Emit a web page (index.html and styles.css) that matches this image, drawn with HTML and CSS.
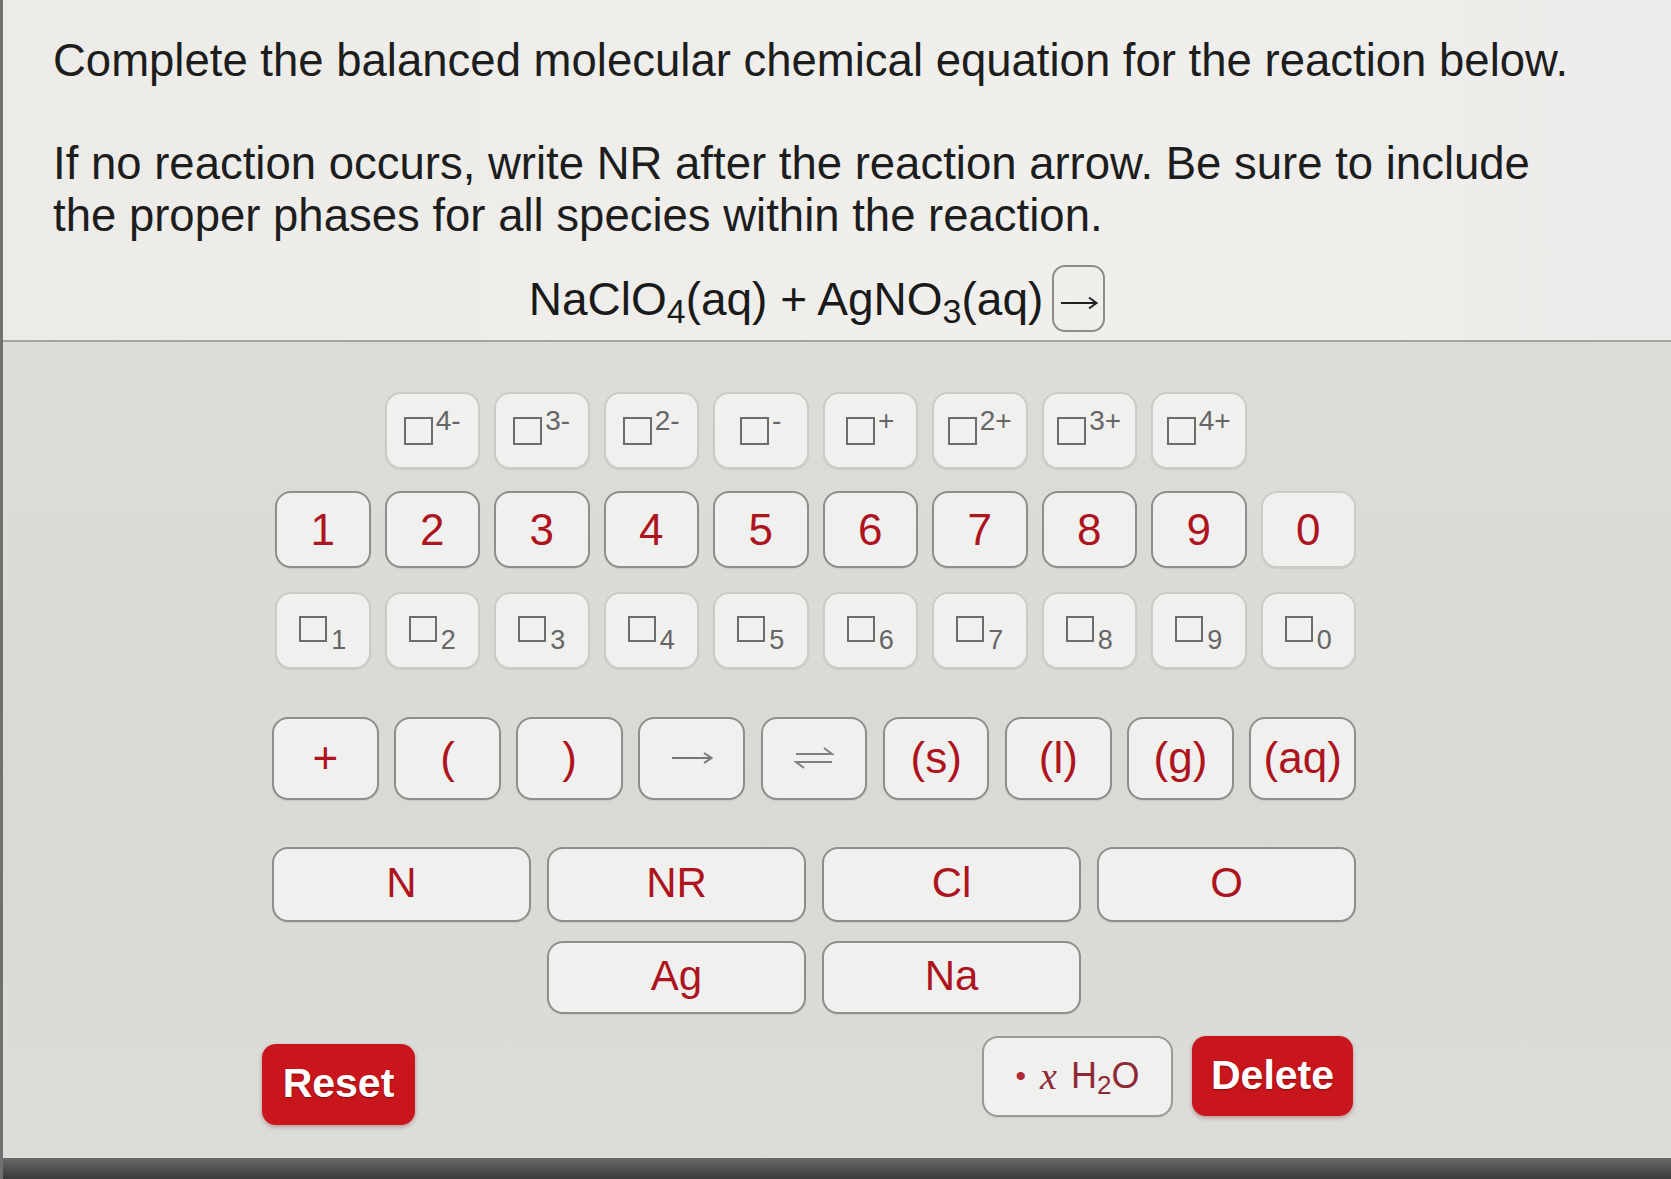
FILE: index.html
```html
<!DOCTYPE html>
<html lang="en">
<head>
<meta charset="utf-8">
<title>Chemical equation</title>
<link rel="stylesheet" href="styles.css">
</head>
<body>
<div class="page">
  <section class="top">
    <p class="q">Complete the balanced molecular chemical equation for the reaction below.</p>
    <p class="q q2">If no reaction occurs, write NR after the reaction arrow. Be sure to include<br>the proper phases for all species within the reaction.</p>
    <div class="eq">
      <span class="eqtext">NaClO<sub>4</sub>(aq) + AgNO<sub>3</sub>(aq)</span>
      <span class="arrowbox"><svg width="40" height="16" viewBox="0 0 40 16"><path d="M2 8 H37 M30 2.5 L37.5 8 L30 13.5" fill="none" stroke="#222" stroke-width="2"/></svg></span>
    </div>
  </section>

  <section class="panel">
    <div class="pad">
      <div class="row grid10 r1">
        <button class="key light c2"><span class="grp sp"><span class="sq"></span><span class="sup">4-</span></span></button>
        <button class="key light"><span class="grp sp"><span class="sq"></span><span class="sup">3-</span></span></button>
        <button class="key light"><span class="grp sp"><span class="sq"></span><span class="sup">2-</span></span></button>
        <button class="key light"><span class="grp sp"><span class="sq"></span><span class="sup">-</span></span></button>
        <button class="key light"><span class="grp sp"><span class="sq"></span><span class="sup">+</span></span></button>
        <button class="key light"><span class="grp sp"><span class="sq"></span><span class="sup">2+</span></span></button>
        <button class="key light"><span class="grp sp"><span class="sq"></span><span class="sup">3+</span></span></button>
        <button class="key light"><span class="grp sp"><span class="sq"></span><span class="sup">4+</span></span></button>
      </div>

      <div class="row grid10 r2">
        <button class="key red dig">1</button>
        <button class="key red dig">2</button>
        <button class="key red dig">3</button>
        <button class="key red dig">4</button>
        <button class="key red dig">5</button>
        <button class="key red dig">6</button>
        <button class="key red dig">7</button>
        <button class="key red dig">8</button>
        <button class="key red dig">9</button>
        <button class="key red dig light">0</button>
      </div>

      <div class="row grid10 r3">
        <button class="key light"><span class="grp sb"><span class="sq sqs"></span><span class="sub">1</span></span></button>
        <button class="key light"><span class="grp sb"><span class="sq sqs"></span><span class="sub">2</span></span></button>
        <button class="key light"><span class="grp sb"><span class="sq sqs"></span><span class="sub">3</span></span></button>
        <button class="key light"><span class="grp sb"><span class="sq sqs"></span><span class="sub">4</span></span></button>
        <button class="key light"><span class="grp sb"><span class="sq sqs"></span><span class="sub">5</span></span></button>
        <button class="key light"><span class="grp sb"><span class="sq sqs"></span><span class="sub">6</span></span></button>
        <button class="key light"><span class="grp sb"><span class="sq sqs"></span><span class="sub">7</span></span></button>
        <button class="key light"><span class="grp sb"><span class="sq sqs"></span><span class="sub">8</span></span></button>
        <button class="key light"><span class="grp sb"><span class="sq sqs"></span><span class="sub">9</span></span></button>
        <button class="key light"><span class="grp sb"><span class="sq sqs"></span><span class="sub">0</span></span></button>
      </div>

      <div class="row grid9 r4">
        <button class="key red sym">+</button>
        <button class="key red sym">(</button>
        <button class="key red sym">)</button>
        <button class="key sym" aria-label="arrow"><svg width="44" height="16" viewBox="0 0 44 16"><path d="M2 8 H41 M34 3 L41.5 8 L34 13" fill="none" stroke="#777" stroke-width="2"/></svg></button>
        <button class="key sym" aria-label="equilibrium"><svg width="40" height="26" viewBox="0 0 40 26"><path d="M2 9 H38 L30 3 M38 17 H2 L10 23" fill="none" stroke="#808080" stroke-width="2"/></svg></button>
        <button class="key red sym">(s)</button>
        <button class="key red sym">(l)</button>
        <button class="key red sym">(g)</button>
        <button class="key red sym">(aq)</button>
      </div>

      <div class="row grid4 r5">
        <button class="key red el">N</button>
        <button class="key red el">NR</button>
        <button class="key red el">Cl</button>
        <button class="key red el">O</button>
      </div>

      <div class="row grid4 r6">
        <button class="key red el c2">Ag</button>
        <button class="key red el">Na</button>
      </div>

      <div class="row r7">
        <button class="action reset">Reset</button>
        <button class="key water"><span class="dot">&#8226;</span><span class="xi">x</span><span class="h2o">H<sub>2</sub>O</span></button>
        <button class="action delete">Delete</button>
      </div>
    </div>
  </section>
  <div class="bottombar"></div>
</div>
</body>
</html>
```

FILE: styles.css
```css
* { box-sizing: border-box; }

html, body {
  margin: 0;
  padding: 0;
}

body {
  width: 1671px;
  height: 1179px;
  overflow: hidden;
  font-family: "Liberation Sans", Arial, sans-serif;
  background: #dbdbd8;
}

.page {
  width: 1671px;
  height: 1179px;
  border-left: 3px solid #707070;
  display: flex;
  flex-direction: column;
}

.top {
  background: linear-gradient(90deg, #ecebe8 0%, #f0efec 60%, #edecea 100%);
  padding: 35px 0 8px 50px;
  border-bottom: 2px solid #a4a4a1;
  height: 342px;
}

.q {
  margin: 0;
  font-size: 45.5px;
  line-height: 52px;
  color: #1d1d1d;
  white-space: nowrap;
}

.q2 {
  margin-top: 51px;
}

.eq {
  display: flex;
  align-items: center;
  justify-content: center;
  width: 1084px;
  margin: 23px 0 0 222px;
  gap: 9px;
}

.eqtext {
  font-size: 46px;
  line-height: 52px;
  color: #1a1a1a;
  white-space: nowrap;
}

.eqtext sub {
  font-size: 34px;
  vertical-align: -8px;
  line-height: 0;
}

.arrowbox {
  width: 53px;
  height: 67px;
  border: 2px solid #8c8c8a;
  border-radius: 13px;
  display: flex;
  align-items: center;
  justify-content: center;
  padding-top: 8px;
}

.panel {
  height: 816px;
  background: linear-gradient(180deg, #dcdcd9 0%, #d9d9d6 60%, #dcdcd9 100%);
  padding-top: 50px;
}

.pad {
  width: 1084px;
  margin-left: 269px;
}

.row {
  display: grid;
}

.grid10 {
  grid-template-columns: repeat(10, 1fr);
  column-gap: 14px;
  padding-left: 3px;
  height: 77px;
}

.grid9 {
  grid-template-columns: repeat(9, 1fr);
  column-gap: 15.5px;
}

.grid4 {
  grid-template-columns: repeat(4, 1fr);
  column-gap: 16px;
}

.c2 { grid-column-start: 2; }

.r2 { margin-top: 22px; }
.r3 { margin-top: 24px; }
.r4 { margin-top: 48px; height: 83px; }
.r5 { margin-top: 47px; height: 75px; }
.r6 { margin-top: 19px; height: 73px; }

.key {
  display: flex;
  align-items: center;
  justify-content: center;
  background: #f0f0ee;
  border: 2px solid #8e8e8c;
  border-radius: 16px;
  font-family: "Liberation Sans", Arial, sans-serif;
  padding: 0;
  margin: 0;
  height: 100%;
  box-shadow: 0 1px 1px rgba(0, 0, 0, 0.08);
}

.key.light {
  border-color: #cbcbc8;
}

.red { color: #ad1420; }

.dig {
  font-size: 44px;
  line-height: 1;
}

.sym {
  font-size: 44px;
  line-height: 1;
  padding-bottom: 2px;
}

.el {
  font-size: 42px;
  line-height: 1;
  padding-bottom: 4px;
}

.grp {
  display: flex;
}

.sp { align-items: flex-start; }
.sb { align-items: flex-end; }

.sq {
  display: block;
  width: 29px;
  height: 28px;
  border: 2px solid #6c6c6c;
}

.sqs {
  width: 28px;
  height: 26px;
}

.sup {
  font-size: 28px;
  line-height: 28px;
  color: #666666;
  margin-top: -10px;
  margin-left: 3px;
}

.sub {
  font-size: 27px;
  line-height: 27px;
  color: #666666;
  margin-bottom: -12px;
  margin-left: 4px;
}

.r3 .grp { margin-top: -4px; }

.r7 {
  display: flex;
  align-items: flex-start;
  margin-top: 22px;
}

.action {
  background: #c9161c;
  color: #ffffff;
  border: none;
  border-radius: 14px;
  font-family: "Liberation Sans", Arial, sans-serif;
  font-weight: bold;
  font-size: 41px;
  line-height: 1;
  padding: 0 0 2px 0;
  text-shadow: 0 1px 2px rgba(90, 0, 0, 0.6);
  box-shadow: 0 2px 4px rgba(120, 20, 20, 0.35);
}

.reset {
  width: 153px;
  height: 81px;
  margin-left: -10px;
  margin-top: 8px;
}

.water {
  width: 191px;
  height: 81px;
  margin-left: auto;
  border-color: #9a9a98;
  color: #8e2a36;
  font-size: 36px;
  gap: 0;
  padding-bottom: 2px;
}

.dot {
  color: #b02a38;
  font-size: 30px;
  margin-right: 14px;
}

.xi {
  font-family: "Liberation Serif", "Times New Roman", serif;
  font-style: italic;
  font-size: 38px;
  margin-right: 14px;
}

.h2o sub {
  font-size: 26px;
  line-height: 0;
  vertical-align: -6px;
}

.delete {
  width: 161px;
  height: 80px;
  margin-left: 19px;
  margin-right: 3px;
}

.bottombar {
  height: 21px;
  background: linear-gradient(180deg, #6a6a6a 0%, #3a3a3a 100%);
}
```
